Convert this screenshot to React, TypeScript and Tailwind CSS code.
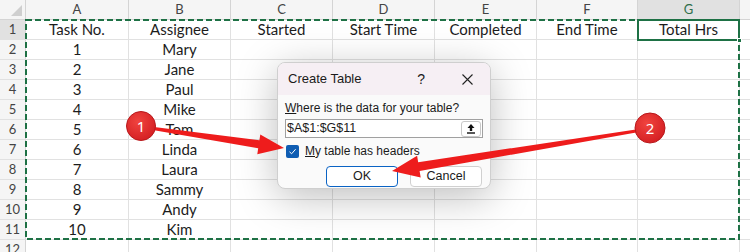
import React from "react";

const cols = [
  { letter: "A", w: "w-[103px]" },
  { letter: "B", w: "w-[102px]" },
  { letter: "C", w: "w-[102px]" },
  { letter: "D", w: "w-[102px]" },
  { letter: "E", w: "w-[102px]" },
  { letter: "F", w: "w-[101px]" },
  { letter: "G", w: "w-[102px]" },
];

const names = ["Mary", "Jane", "Paul", "Mike", "Tom", "Linda", "Laura", "Sammy", "Andy", "Kim"];

const rows: string[][] = [
  ["Task No.", "Assignee", "Started", "Start Time", "Completed", "End Time", "Total Hrs"],
  ...names.map((n, i) => [String(i + 1), n, "", "", "", "", ""]),
  ["", "", "", "", "", "", ""],
];

const Sheet = () => {
  return (
    <div className="flex flex-col">
      <div className="flex h-[20px] bg-[#f5f5f5] border-b border-[#d4d4d4] text-[13px] text-[#444]">
        <div className="w-[26px] border-r border-[#d4d4d4] relative">
          <svg className="absolute right-[3px] bottom-[3px]" width="11" height="11">
            <polygon points="11,0 11,11 0,11" fill="#cfcfcf" />
          </svg>
        </div>
        {cols.map((c) => (
          <div
            key={c.letter}
            className={`${c.w} shrink-0 flex items-center justify-center border-r border-[#d4d4d4] ${
              c.letter === "G" ? "bg-[#e1e1e1] text-[#2f6e4a]" : ""
            }`}
          >
            {c.letter}
          </div>
        ))}
        <div className="flex-1" />
      </div>
      {rows.map((r, i) => (
        <div key={i} className="flex h-[20px] border-b border-[#e1e1e1]">
          <div
            className={`w-[26px] shrink-0 flex items-center justify-center border-r border-[#d4d4d4] text-[13px] text-[#444] ${
              i === 0 ? "bg-[#e1e1e1]" : "bg-[#f5f5f5]"
            }`}
          >
            {i + 1}
          </div>
          {cols.map((c, j) => (
            <div
              key={c.letter}
              className={`${c.w} shrink-0 flex items-center justify-center border-r border-[#e1e1e1] text-[15px] text-[#1c1c1c]`}
            >
              {r[j]}
            </div>
          ))}
          <div className="flex-1" />
        </div>
      ))}
    </div>
  );
};

const Dialog = () => {
  return (
    <div className="absolute left-[277px] top-[62px] w-[214px] h-[127px] rounded-[8px] border border-[#cfcfcf] bg-[#fafafa] overflow-hidden shadow-[0_8px_40px_rgba(0,0,0,0.26)] font-['Liberation_Sans',Arial,sans-serif] text-[#1b1b1b]">
      <div className="h-[32px] bg-[#f6eff4] flex items-center pl-[10px] pr-[17px] text-[13px]">
        <span className="flex-1">Create Table</span>
        <span className="mr-[37px] text-[14px]">?</span>
        <svg width="11" height="11" viewBox="0 0 11 11">
          <path d="M0.5 0.5 L10.5 10.5 M10.5 0.5 L0.5 10.5" stroke="#222" strokeWidth="1.1" />
        </svg>
      </div>
      <div className="px-[7px] pt-[4px]">
        <div className="text-[12px] leading-[18px]">
          <span className="underline">W</span>here is the data for your table?
        </div>
        <div className="mt-[2px] h-[19px] border border-[#a0a0a0] bg-white flex items-center pl-[1px] pr-[1px] text-[12.5px]">
          <span className="flex-1">$A$1:$G$11</span>
          <div className="w-[20px] h-[16px] rounded-[3px] border border-[#c8c8c8] flex items-center justify-center">
            <svg width="10" height="11" viewBox="0 0 10 11">
              <path d="M5 1 L1.5 5 H3.8 V8 H6.2 V5 H8.5 Z" fill="#111" />
              <rect x="1" y="9.3" width="8" height="1.4" fill="#111" />
            </svg>
          </div>
        </div>
        <div className="mt-[6px] flex items-center text-[12px] h-[14px]">
          <div className="w-[13px] h-[13px] ml-[1px] rounded-[2px] bg-[#0f5db3] flex items-center justify-center">
            <svg width="9" height="9" viewBox="0 0 9 9">
              <path d="M1.5 4.8 L3.6 6.8 L7.6 2.2" stroke="white" strokeWidth="1" fill="none" />
            </svg>
          </div>
          <span className="ml-[6px]">
            <span className="underline">M</span>y table has headers
          </span>
        </div>
        <div className="mt-[8px] flex justify-end gap-[12px] pr-[1px] text-[12.5px]">
          <div className="w-[72px] h-[21px] rounded-[4px] border border-[#0a63c4] bg-white flex items-center justify-center">
            OK
          </div>
          <div className="w-[72px] h-[21px] rounded-[4px] border border-[#d0d0d0] bg-white flex items-center justify-center">
            Cancel
          </div>
        </div>
      </div>
    </div>
  );
};

const Annotations = () => {
  return (
    <svg className="absolute left-0 top-0" width="750" height="252">
      <defs>
        <radialGradient id="cg" cx="0.4" cy="0.35" r="0.7">
          <stop offset="0" stopColor="#f0443f" />
          <stop offset="1" stopColor="#d41e22" />
        </radialGradient>
      </defs>
      <polygon
        points="149.8,129.5 258.2,148.3 257.3,154.2 284,148 260.3,134.4 259.4,140.3 150.2,126.5"
        fill="#ee1c1c"
      />
      <polygon
        points="636.2,132.5 419.6,171.0 420.7,177.5 392,171 417.1,155.7 418.2,162.2 635.8,129.5"
        fill="#ee1c1c"
      />
      <circle cx="141" cy="126" r="14.5" fill="url(#cg)" stroke="#b8181b" strokeWidth="1" />
      <text x="141" y="131.5" textAnchor="middle" fill="white" fontSize="15" fontFamily="Noto Sans, sans-serif">
        1
      </text>
      <circle cx="650" cy="128" r="15" fill="url(#cg)" stroke="#b8181b" strokeWidth="1" />
      <text x="650" y="133.5" textAnchor="middle" fill="white" fontSize="15" fontFamily="Noto Sans, sans-serif">
        2
      </text>
    </svg>
  );
};

export default function App() {
  return (
    <div className="relative w-[750px] h-[252px] overflow-hidden bg-white font-['Lato',sans-serif]">
      <Sheet />
      {/* copy marquee around A1:G11 */}
      <svg className="absolute left-0 top-0" width="750" height="252">
        <rect x="26" y="20" width="713" height="219" fill="none" stroke="#1e7145" strokeWidth="2" strokeDasharray="6 3" />
      </svg>
      {/* active cell G1 */}
      <div className="absolute left-[637px] top-[19px] w-[103px] h-[22px] border-2 border-[#1e7145]" />
      <div className="absolute left-[737px] top-[38px] w-[5px] h-[5px] bg-[#1e7145] border border-white" />
      <Dialog />
      <Annotations />
    </div>
  );
}
